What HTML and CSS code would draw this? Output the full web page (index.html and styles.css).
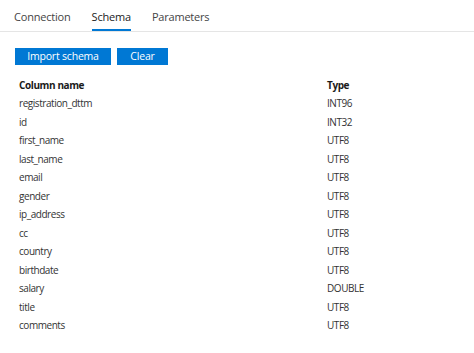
FILE: index.html
```html
<!DOCTYPE html>
<html>
<head>
<meta charset="utf-8">
<link rel="stylesheet" href="styles.css">
</head>
<body>
<div class="tabs">
  <div class="tab">Connection</div>
  <div class="tab active">Schema</div>
  <div class="tab">Parameters</div>
</div>
<div class="toolbar">
  <button class="btn btn-import">Import schema</button>
  <button class="btn btn-clear">Clear</button>
</div>
<div class="schema">
  <div class="row head"><span class="name">Column name</span><span class="type">Type</span></div>
  <div class="row"><span class="name">registration_dttm</span><span class="type">INT96</span></div>
  <div class="row"><span class="name">id</span><span class="type">INT32</span></div>
  <div class="row"><span class="name">first_name</span><span class="type">UTF8</span></div>
  <div class="row"><span class="name">last_name</span><span class="type">UTF8</span></div>
  <div class="row"><span class="name">email</span><span class="type">UTF8</span></div>
  <div class="row"><span class="name">gender</span><span class="type">UTF8</span></div>
  <div class="row"><span class="name">ip_address</span><span class="type">UTF8</span></div>
  <div class="row"><span class="name">cc</span><span class="type">UTF8</span></div>
  <div class="row"><span class="name">country</span><span class="type">UTF8</span></div>
  <div class="row"><span class="name">birthdate</span><span class="type">UTF8</span></div>
  <div class="row"><span class="name">salary</span><span class="type">DOUBLE</span></div>
  <div class="row"><span class="name">title</span><span class="type">UTF8</span></div>
  <div class="row"><span class="name">comments</span><span class="type">UTF8</span></div>
</div>
</body>
</html>
```
FILE: styles.css
```css
html, body {
  margin: 0;
  padding: 0;
  background: #ffffff;
}
body {
  font-family: "Open Sans", "Noto Sans", sans-serif;
  font-size: 10px;
  color: #323130;
  width: 474px;
  height: 353px;
  overflow: hidden;
}
.tabs {
  display: flex;
  gap: 21px;
  padding-left: 14px;
  height: 31px;
  border-bottom: 1px solid #e5e5e5;
}
.tab {
  font-size: 11px;
  letter-spacing: -0.2px;
  line-height: 16px;
  padding-top: 9px;
  color: #444444;
  box-sizing: border-box;
  height: 31px;
  border-bottom: 2px solid transparent;
}
.tab.active {
  color: #222222;
  border-bottom-color: #0078d4;
}
.toolbar {
  display: flex;
  gap: 6px;
  padding: 16px 0 0 15px;
}
.btn {
  font-family: inherit;
  font-size: 10.5px;
  letter-spacing: -0.2px;
  color: #ffffff;
  background: #0078d4;
  border: none;
  height: 17px;
  padding: 0;
  line-height: 17px;
  margin: 0;
}
.btn-import { width: 96px; }
.btn-clear { width: 51px; }
.schema {
  padding: 11px 0 0 19px;
}
.row {
  display: flex;
  height: 18.5px;
  line-height: 18.5px;
  color: #333333;
  font-size: 10px;
  letter-spacing: -0.45px;
}
.row.head {
  height: 18px;
  line-height: 18px;
  font-weight: 700;
  color: #1a1a1a;
  letter-spacing: -0.4px;
}
.name { width: 308px; }
```
